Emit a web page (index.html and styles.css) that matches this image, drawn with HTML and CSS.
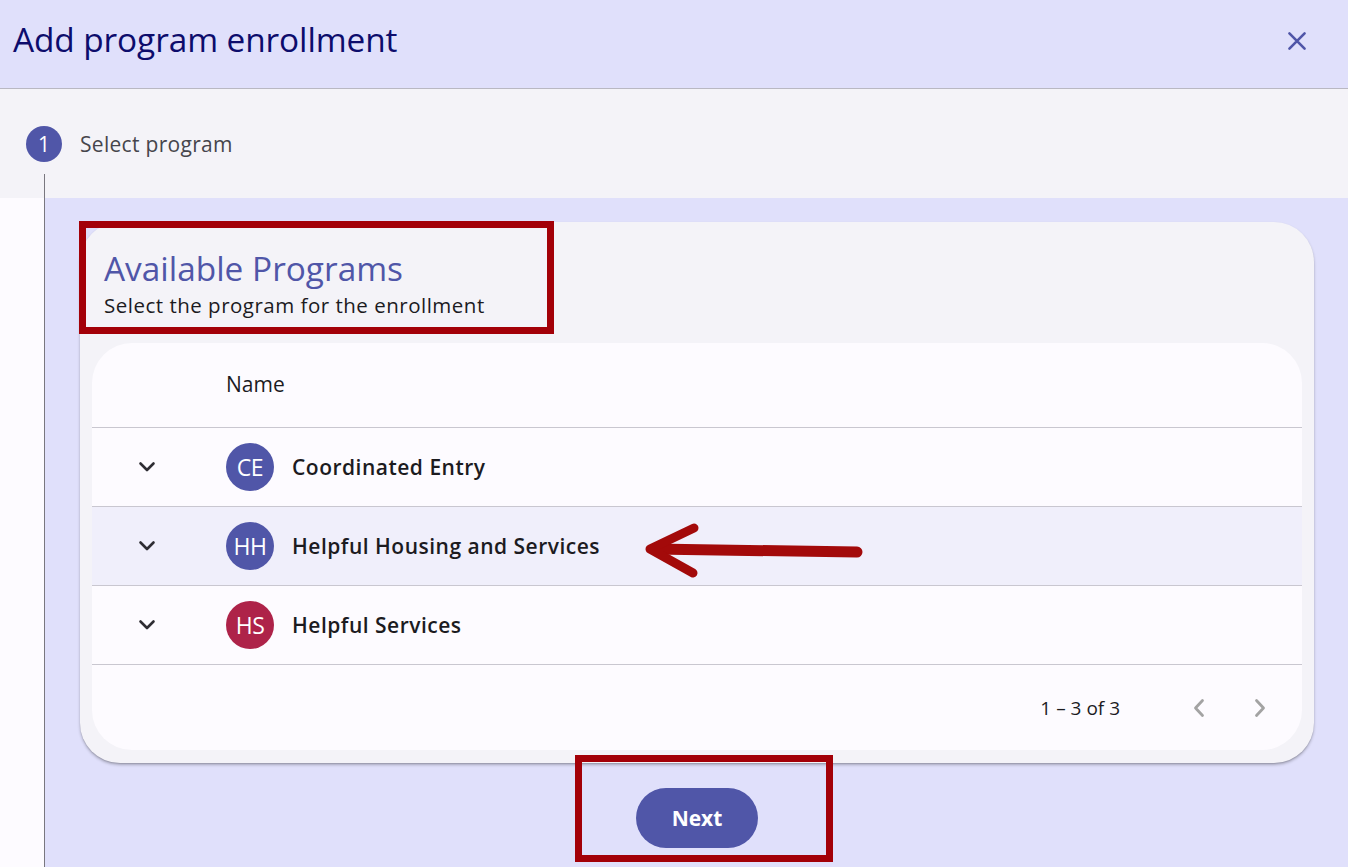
FILE: index.html
```html
<!DOCTYPE html>
<html lang="en">
<head>
<meta charset="utf-8">
<title>Add program enrollment</title>
<link rel="stylesheet" href="styles.css">
</head>
<body>
<div class="dialog">
  <header class="dlg-header">
    <h1 class="dlg-title">Add program enrollment</h1>
    <button class="close-btn" aria-label="Close">
      <svg viewBox="0 0 24 24" width="24" height="24"><path d="M5 5 L19 19 M19 5 L5 19" stroke="#5056a8" stroke-width="2.4" stroke-linecap="round" fill="none"/></svg>
    </button>
  </header>

  <div class="step-head">
    <div class="step-marker">
      <div class="step-num">1</div>
      <div class="step-line"></div>
    </div>
    <div class="step-label">Select program</div>
  </div>

  <div class="step-body">
    <section class="card">
      <div class="card-head">
        <h2 class="card-title">Available Programs</h2>
        <p class="card-sub">Select the program for the enrollment</p>
      </div>
      <div class="table">
        <div class="row head-row">
          <div class="cell-expand"></div>
          <div class="cell-name head-name">Name</div>
        </div>
        <div class="row">
          <div class="cell-expand"><svg class="chev" viewBox="0 0 24 24" width="24" height="24"><path d="M5.5 8.5 L12 15 L18.5 8.5" stroke="#2e2d33" stroke-width="2.6" fill="none" stroke-linecap="round" stroke-linejoin="round"/></svg></div>
          <div class="cell-name"><span class="avatar av-blue">CE</span><span class="prog">Coordinated Entry</span></div>
        </div>
        <div class="row row-hl">
          <div class="cell-expand"><svg class="chev" viewBox="0 0 24 24" width="24" height="24"><path d="M5.5 8.5 L12 15 L18.5 8.5" stroke="#2e2d33" stroke-width="2.6" fill="none" stroke-linecap="round" stroke-linejoin="round"/></svg></div>
          <div class="cell-name"><span class="avatar av-blue">HH</span><span class="prog">Helpful Housing and Services</span></div>
        </div>
        <div class="row">
          <div class="cell-expand"><svg class="chev" viewBox="0 0 24 24" width="24" height="24"><path d="M5.5 8.5 L12 15 L18.5 8.5" stroke="#2e2d33" stroke-width="2.6" fill="none" stroke-linecap="round" stroke-linejoin="round"/></svg></div>
          <div class="cell-name"><span class="avatar av-red">HS</span><span class="prog">Helpful Services</span></div>
        </div>
        <div class="paginator">
          <span class="range">1 – 3 of 3</span>
          <button class="pg-btn" aria-label="Previous page"><svg viewBox="0 0 24 24" width="24" height="24"><path d="M15.5 4.5 L8.5 12 L15.5 19.5" stroke="#a3a3a3" stroke-width="2.8" fill="none" stroke-linecap="round" stroke-linejoin="round"/></svg></button>
          <button class="pg-btn" aria-label="Next page"><svg viewBox="0 0 24 24" width="24" height="24"><path d="M8.5 4.5 L15.5 12 L8.5 19.5" stroke="#a3a3a3" stroke-width="2.8" fill="none" stroke-linecap="round" stroke-linejoin="round"/></svg></button>
        </div>
      </div>
    </section>
    <div class="actions">
      <button class="next-btn">Next</button>
    </div>
  </div>
</div>

<div class="annot annot-title"></div>
<div class="annot annot-next"></div>
<svg class="annot-arrow" width="240" height="70" viewBox="0 0 240 70">
  <path d="M16 27 L219 30" stroke="#a30a0a" stroke-width="11" stroke-linecap="round" fill="none"/>
  <path d="M56 6 L12 27 L55 51" stroke="#a30a0a" stroke-width="9" stroke-linecap="round" stroke-linejoin="round" fill="none"/>
</svg>
</body>
</html>
```

FILE: styles.css
```css
* { box-sizing: border-box; }
html, body { margin: 0; padding: 0; }
body {
  font-family: "Open Sans", "Noto Sans", sans-serif;
  background: #fdfbff;
  color: #1c1b1f;
  width: 1348px;
  height: 867px;
  overflow: hidden;
  position: relative;
}
button { font-family: inherit; border: 0; background: none; padding: 0; cursor: pointer; }

.dialog { display: flex; flex-direction: column; height: 867px; }

.dlg-header {
  height: 89px;
  flex: none;
  background: #e0e0fb;
  border-bottom: 1px solid #b9b8c2;
  display: flex;
  align-items: center;
  justify-content: space-between;
  padding: 0 37px 0 13px;
}
.dlg-title {
  margin: 0;
  font-size: 33.4px;
  font-weight: 400;
  color: #0d0c6c;
  letter-spacing: -0.1px;
  padding-bottom: 10px;
}
.close-btn { width: 28px; height: 28px; display: flex; align-items: center; justify-content: center; margin-bottom: 6px; }
.close-btn svg { width: 26px; height: 26px; }

.step-head {
  height: 109px;
  flex: none;
  background: #f4f3f8;
  display: flex;
  padding: 37px 0 0 26px;
}
.step-marker { display: flex; flex-direction: column; width: 36px; }
.step-num {
  width: 36px; height: 36px; border-radius: 50%;
  background: #5056a8; color: #fff;
  display: flex; align-items: center; justify-content: center;
  font-size: 21px;
}
.step-line { flex: 1; width: 1px; margin: 12px 0 0 18px; background: #79777f; }
.step-label { margin-left: 18px; height: 36px; line-height: 36px; font-size: 21px; letter-spacing: 0.3px; color: #46454c; }

.step-body {
  flex: 1;
  margin-left: 44px;
  border-left: 1px solid #79777f;
  background: #e0e0fb;
  padding: 24px 34px 0 35px;
}

.card {
  background: #f4f3f8;
  border-radius: 40px;
  box-shadow: 0 2px 3px rgba(0,0,0,0.25), 0 1px 1px rgba(0,0,0,0.1);
  padding: 25px 12px 13px 12px;
}
.card-head { padding: 0 12px; }
.card-title { margin: 0; font-size: 33.4px; font-weight: 400; color: #5056a8; line-height: 42px; }
.card-sub { margin: 3px 0 0; font-size: 20.5px; line-height: 26px; letter-spacing: 0.5px; color: #1c1b1f; }

.table {
  margin-top: 25px;
  background: #fdfbff;
  border-radius: 40px;
  overflow: hidden;
}
.row {
  display: flex;
  align-items: center;
  height: 79px;
  border-bottom: 1px solid #c9c7d0;
}
.head-row { height: 85px; }
.row-hl { background: #f0effb; }
.cell-expand { width: 134px; flex: none; padding-left: 43px; display: flex; align-items: center; }
.chev { width: 24px; height: 24px; }
.cell-name { display: flex; align-items: center; }
.head-name { font-size: 21px; color: #1c1b1f; padding-bottom: 2px; }
.avatar {
  width: 48px; height: 48px; border-radius: 50%;
  display: flex; align-items: center; justify-content: center;
  color: #fff; font-size: 23px; letter-spacing: -0.5px;
  margin-right: 18px;
}
.av-blue { background: #5056a8; }
.av-red { background: #ae2349; }
.prog { font-size: 21px; font-weight: 600; color: #1c1b1f; letter-spacing: 0.5px; }

.paginator {
  height: 85px;
  display: flex;
  align-items: center;
  justify-content: flex-end;
  padding-right: 22px;
}
.range { font-size: 19px; color: #1c1b1f; margin-right: 59px; }
.pg-btn { width: 40px; height: 40px; display: flex; align-items: center; justify-content: center; margin-left: 21px; }
.pg-btn:first-of-type { margin-left: 0; }

.actions { display: flex; justify-content: center; padding-top: 25px; }
.next-btn {
  width: 122px; height: 60px; border-radius: 30px;
  background: #5056a8; color: #fff;
  font-size: 21px; font-weight: 700;
}

/* annotation overlays */
.annot { position: absolute; border: 7px solid #a30008; }
.annot-title { left: 79px; top: 221px; width: 475px; height: 113px; }
.annot-next { left: 575px; top: 755px; width: 258px; height: 107px; }
.annot-arrow { position: absolute; left: 638px; top: 522px; }
```
